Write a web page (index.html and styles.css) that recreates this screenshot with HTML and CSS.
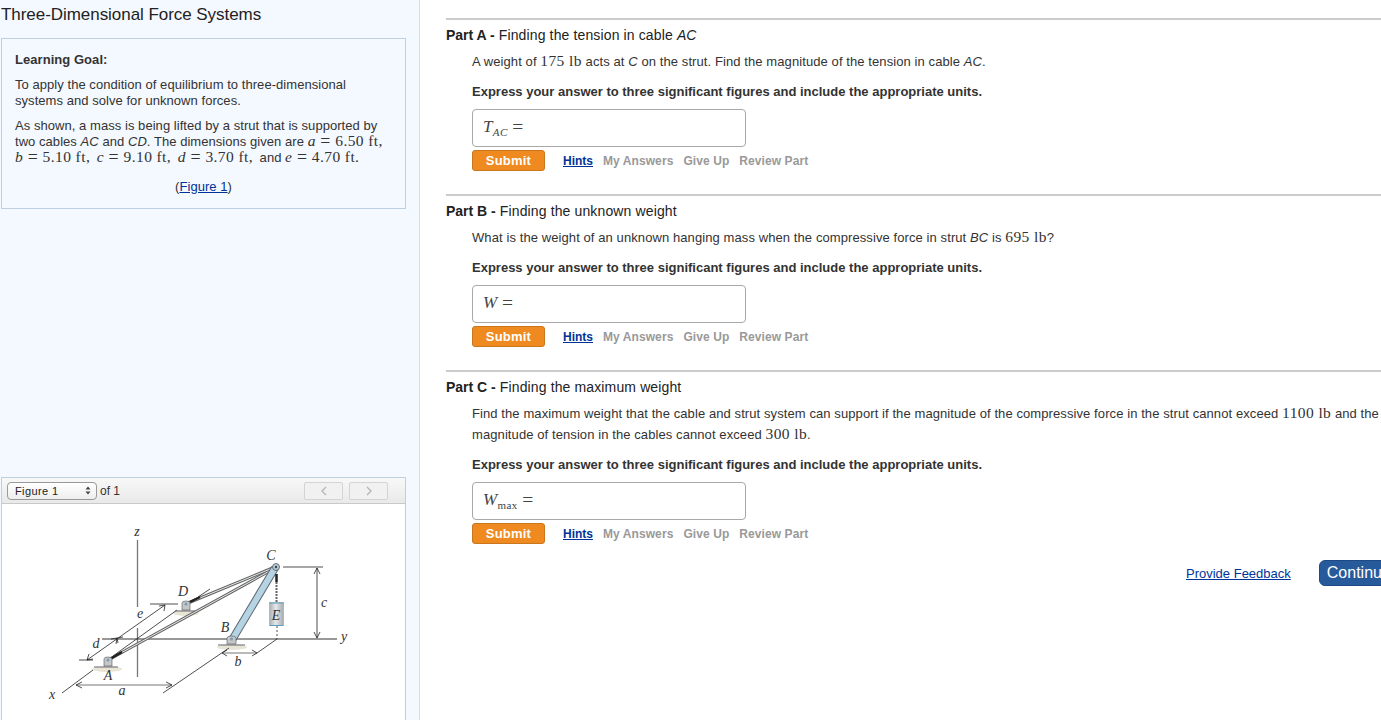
FILE: index.html
```html
<!DOCTYPE html>
<html lang="en">
<head>
    <meta charset="UTF-8">
    <title>Three-Dimensional Force Systems</title>
    <link rel="stylesheet" href="styles.css">
</head>
<body>
    <div class="page">
        <!-- Left pane -->
        <div class="left-pane">
            <h1 class="item-title">Three-Dimensional Force Systems</h1>
            <div class="intro">
                <p class="goal-label">Learning Goal:</p>
                <p>To apply the condition of equilibrium to three-dimensional systems and solve for unknown forces.</p>
                <p>As shown, a mass is being lifted by a strut that is supported by two cables <i>AC</i> and <i>CD</i>. The dimensions given are <span class="math list-item"><i>a</i><span class="eq">=</span>6.50 ft,</span> <span class="math list-item"><i>b</i><span class="eq">=</span>5.10 ft,</span> <span class="math list-item"><i>c</i><span class="eq">=</span>9.10 ft,</span> <span class="math list-item"><i>d</i><span class="eq">=</span>3.70 ft,</span> and <span class="math"><i>e</i><span class="eq">=</span>4.70 ft.</span></p>
                <p class="figure-link">(<a href="#">Figure 1</a>)</p>
            </div>
            <div class="figure-box">
                <div class="figure-bar">
                    <span class="figure-select">Figure 1
                        <svg class="select-arrows" viewBox="0 0 6 9" width="6" height="9"><path d="M3 0.5L5.5 3.5H0.5ZM3 8.5L5.5 5.5H0.5Z"/></svg>
                    </span>
                    <span class="figure-of">of 1</span>
                    <span class="nav-buttons">
                        <span class="nav-btn"><svg viewBox="0 0 6 10" width="6" height="10"><path d="M5 1L1 5L5 9"/></svg></span>
                        <span class="nav-btn"><svg viewBox="0 0 6 10" width="6" height="10"><path d="M1 1L5 5L1 9"/></svg></span>
                    </span>
                </div>
                <svg class="figure-img" viewBox="2 504 403 216" width="403" height="216">
                    <defs>
                        <linearGradient id="weightFill">
                            <stop offset="0" stop-color="#a9afb4"/>
                            <stop offset="0.45" stop-color="#e6e9eb"/>
                            <stop offset="1" stop-color="#a4aaaf"/>
                        </linearGradient>
                    </defs>
                    <!-- ground pads -->
                    <g class="ground">
                        <ellipse cx="107" cy="669" rx="15" ry="3"/>
                        <ellipse cx="186" cy="613" rx="13" ry="3"/>
                        <ellipse cx="232" cy="647" rx="15" ry="3"/>
                    </g>
                    <!-- z axis -->
                    <path d="M137.500 540V607M137.500 628V677" class="axis-z"/>
                    <!-- y axis -->
                    <path d="M102 639H337" class="axis"/>
                    <!-- x axis and dimension lines -->
                    <g class="dim">
                        <path d="M62 693L93 670"/>
                        <path d="M163 693L229 648"/>
                        <path d="M76 685H172" class="dim-gray"/>
                        <path d="M76 685l6 -3M76 685l6 3M172 685l-6 -3M172 685l-6 3"/>
                        <path d="M79 660H93"/>
                        <path d="M150 604H178"/>
                        <path d="M87 660L165 605"/>
                        <path d="M113 656L177 610"/>
                        <path d="M87 660l2 -6M87 660l6 -1M117 638l-6 1M117 638l-1 6M117 638l6 -1M117 638l1 5M165 605l-6 1M165 605l-1 6"/>
                        <path d="M222 653H257" class="dim-gray"/>
                        <path d="M222 653l5 -3M222 653l5 3M257 653l-5 -3M257 653l-5 3"/>
                        <path d="M257 653L277 639"/>
                        <path d="M283 567H323"/>
                        <path d="M317 568V638"/>
                        <path d="M317 568l-3 6M317 568l3 6M317 638l-3 -6M317 638l3 -6"/>
                        <path d="M277 626V639" stroke-dasharray="2 2"/>
                        <path d="M198 597L210 589"/>
                    </g>
                    <path d="M94 667H118M175 611H195M218 645H245" class="base"/>
                    <!-- cables -->
                    <g class="cable">
                        <path d="M110 659L275 568"/>
                        <path d="M188 603L275 567"/>
                    </g>
                    <g class="cable-inner">
                        <path d="M110 659L275 568"/>
                        <path d="M188 603L275 567"/>
                    </g>
                    <path d="M110 659L122 652M190 602L200 597" class="cable-end"/>
                    <!-- strut -->
                    <path d="M232 640L275 568" class="strut"/>
                    <path d="M232 640L275 568" class="strut-fill"/>
                    <!-- supports -->
                    <g class="support">
                        <path d="M104 666V659Q104 657 108 657Q112 657 112 659V666Z"/>
                        <path d="M182 610V603Q182 601 186 601Q190 601 190 603V610Z"/>
                        <path d="M227 644V638Q227 636 231.500 636Q236 636 236 638V644Z"/>
                    </g>
                    <g class="support-pin">
                        <circle cx="108" cy="660" r="1.500"/>
                        <circle cx="186" cy="604" r="1.500"/>
                        <circle cx="231.500" cy="639" r="1.500"/>
                    </g>
                    <!-- hanging weight -->
                    <path d="M276.500 582V602" class="chain"/>
                    <path d="M276.500 574V582" class="cable-end"/>
                    <rect x="269.500" y="602.500" width="14" height="23" class="weight"/>
                    <path d="M269.500 603H283.500M269.500 625.500H283.500" class="weight-rim"/>
                    <circle cx="276" cy="567" r="3.500" class="pin"/>
                    <circle cx="276" cy="567" r="1.200" class="pin-hole"/>
                    <!-- labels -->
                    <g class="labels">
                        <text x="137" y="536">z</text>
                        <text x="271" y="560">C</text>
                        <text x="183" y="596">D</text>
                        <text x="140" y="618">e</text>
                        <text x="225" y="632">B</text>
                        <text x="276" y="620">E</text>
                        <text x="324" y="607">c</text>
                        <text x="344" y="641">y</text>
                        <text x="96" y="648">d</text>
                        <text x="108" y="680">A</text>
                        <text x="238" y="666">b</text>
                        <text x="122" y="695">a</text>
                        <text x="52" y="699">x</text>
                    </g>
                </svg>
            </div>
        </div>

        <!-- Right pane -->
        <div class="right-pane">
            <div class="part">
                <h2 class="part-title"><b>Part A -</b> Finding the tension in cable <i>AC</i></h2>
                <p class="question">A weight of <span class="math">175 lb</span> acts at <i>C</i> on the strut. Find the magnitude of the tension in cable <i>AC</i>.</p>
                <p class="instruction">Express your answer to three significant figures and include the appropriate units.</p>
                <div class="answer-box"><span class="math"><i>T<sub>AC</sub></i><span class="eq">=</span></span></div>
                <div class="actions">
                    <span class="submit">Submit</span>
                    <a href="#" class="hints">Hints</a>
                    <span class="action">My Answers</span>
                    <span class="action">Give Up</span>
                    <span class="action">Review Part</span>
                </div>
            </div>
            <div class="part">
                <h2 class="part-title"><b>Part B -</b> Finding the unknown weight</h2>
                <p class="question">What is the weight of an unknown hanging mass when the compressive force in strut <i>BC</i> is <span class="math">695 lb</span>?</p>
                <p class="instruction">Express your answer to three significant figures and include the appropriate units.</p>
                <div class="answer-box"><span class="math"><i>W</i><span class="eq">=</span></span></div>
                <div class="actions">
                    <span class="submit">Submit</span>
                    <a href="#" class="hints">Hints</a>
                    <span class="action">My Answers</span>
                    <span class="action">Give Up</span>
                    <span class="action">Review Part</span>
                </div>
            </div>
            <div class="part">
                <h2 class="part-title"><b>Part C -</b> Finding the maximum weight</h2>
                <p class="question">Find the maximum weight that the cable and strut system can support if the magnitude of the compressive force in the strut cannot exceed <span class="math">1100 lb</span> and the magnitude of tension in the cables cannot exceed <span class="math">300 lb</span>.</p>
                <p class="instruction">Express your answer to three significant figures and include the appropriate units.</p>
                <div class="answer-box"><span class="math"><i>W</i><sub>max</sub><span class="eq">=</span></span></div>
                <div class="actions">
                    <span class="submit">Submit</span>
                    <a href="#" class="hints">Hints</a>
                    <span class="action">My Answers</span>
                    <span class="action">Give Up</span>
                    <span class="action">Review Part</span>
                </div>
            </div>
            <div class="footer-row">
                <a href="#" class="feedback">Provide Feedback</a>
                <span class="continue">Continue</span>
            </div>
        </div>
    </div>
</body>
</html>
```

FILE: styles.css
```css
html, body {
    margin: 0;
    height: 720px;
    overflow: hidden;
}
body {
    font-family: "Liberation Sans", Arial, sans-serif;
    font-size: 13px;
    color: #333;
    background: #fff;
}
p {
    margin: 0;
}
a {
    color: #003399;
}
.page {
    display: flex;
    width: 1381px;
    height: 720px;
    overflow: hidden;
}
.math {
    font-family: "Liberation Serif", "Times New Roman", serif;
    font-size: 15.5px;
    line-height: 0;
    letter-spacing: 0.4px;
    white-space: nowrap;
}
.list-item {
    margin-right: 3px;
}
.eq {
    margin: 0 4.5px;
    font-size: 1.15em;
    line-height: 0;
    vertical-align: -0.05em;
}
sub {
    font-size: 11px;
    line-height: 0;
}

/* Left pane */
.left-pane {
    flex: none;
    box-sizing: border-box;
    width: 420px;
    height: 720px;
    padding: 0 13px 0 1px;
    background: #f4f8ff;
    border-right: 1px solid #d5dfea;
    display: flex;
    flex-direction: column;
    overflow: hidden;
}
.item-title {
    flex: none;
    margin: 0;
    padding-top: 5px;
    height: 38px;
    box-sizing: border-box;
    font-size: 17px;
    line-height: 19px;
    font-weight: normal;
    color: #222;
    letter-spacing: -0.05px;
}
.intro {
    flex: none;
    box-sizing: border-box;
    height: 171px;
    padding: 13px 13px 0;
    border: 1px solid #bcd0e2;
    line-height: 16px;
    letter-spacing: 0.05px;
}
.intro p {
    margin-bottom: 9px;
}
.intro .goal-label {
    font-weight: bold;
}
.figure-link {
    text-align: center;
    padding-top: 4px;
}
.figure-box {
    flex: none;
    box-sizing: border-box;
    margin-top: 268px;
    height: 260px;
    border: 1px solid #bcd0e2;
    background: #fff;
}
.figure-bar {
    height: 26px;
    box-sizing: border-box;
    display: flex;
    align-items: center;
    padding: 0 17px 0 5px;
    background: linear-gradient(#f8f8f8, #e9e9e9);
    border-bottom: 1px solid #c9c9c9;
    font-size: 12px;
}
.figure-select {
    box-sizing: border-box;
    width: 90px;
    height: 18px;
    padding: 0 5px 0 7px;
    display: flex;
    align-items: center;
    justify-content: space-between;
    background: linear-gradient(#fff, #eee);
    border: 1px solid #999;
    border-radius: 4px;
    font-size: 11px;
    letter-spacing: 0.4px;
    color: #222;
}
.select-arrows path {
    fill: #444;
}
.figure-of {
    margin-left: 3px;
}
.nav-buttons {
    margin-left: auto;
    display: flex;
    gap: 6px;
}
.nav-btn {
    box-sizing: border-box;
    width: 39px;
    height: 18px;
    display: flex;
    align-items: center;
    justify-content: center;
    border: 1px solid #d4d4d4;
    border-radius: 2px;
    background: #f1f1f1;
}
.nav-btn path {
    fill: none;
    stroke: #b5b5b5;
    stroke-width: 1.3;
}
.figure-img {
    display: block;
}
.axis {
    stroke: #333;
    stroke-width: 1;
    fill: none;
}
.axis-z {
    stroke: #777;
    stroke-width: 1.3;
    fill: none;
}
.base {
    stroke: #667;
    stroke-width: 1.2;
    fill: none;
}
.dim path {
    stroke: #222;
    stroke-width: 0.8;
    fill: none;
}
.dim .dim-gray {
    stroke: #777;
    stroke-width: 1.2;
}
.ground ellipse {
    fill: #e9e5d6;
}
.cable path {
    stroke: #666;
    stroke-width: 3;
    fill: none;
}
.cable-inner path {
    stroke: #e4e8ea;
    stroke-width: 1;
    fill: none;
}
.cable-end {
    stroke: #222;
    stroke-width: 2.5;
    fill: none;
}
.strut {
    stroke: #5a6670;
    stroke-width: 8;
    fill: none;
}
.strut-fill {
    stroke: #b5d3e3;
    stroke-width: 6;
    fill: none;
}
.support path {
    fill: #c3c7c9;
    stroke: #555;
    stroke-width: 0.6;
}
.support-pin circle {
    fill: #7d9bb0;
}
.chain {
    stroke: #666;
    stroke-width: 2;
    stroke-dasharray: 2 1;
    fill: none;
}
.weight {
    fill: url(#weightFill);
    stroke: #999;
    stroke-width: 0.5;
}
.weight-rim {
    stroke: #5aa0c0;
    stroke-width: 1;
}
.pin {
    fill: #b5c9d4;
    stroke: #555;
    stroke-width: 0.8;
}
.pin-hole {
    fill: #345;
}
.labels text {
    font-family: "Liberation Serif", "Times New Roman", serif;
    font-style: italic;
    font-size: 14px;
    text-anchor: middle;
    fill: #333;
}

/* Right pane */
.right-pane {
    flex: none;
    width: 961px;
    box-sizing: border-box;
    padding: 18px 0 0 26px;
}
.part {
    width: 1100px;
    height: 176px;
    box-sizing: border-box;
    border-top: 2px solid #ccc;
    padding-top: 6px;
}
.part:last-of-type {
    height: auto;
}
.part-title {
    margin: 0;
    font-size: 14px;
    font-weight: normal;
    line-height: 18px;
    color: #222;
    letter-spacing: 0.13px;
}
.part-title b {
    letter-spacing: 0;
}
.question {
    margin: 7px 0 0 26px;
    width: 915px;
    line-height: 21px;
    letter-spacing: 0.09px;
}
.instruction {
    margin: 9px 0 0 26px;
    font-weight: bold;
    line-height: 21px;
}
.answer-box {
    box-sizing: border-box;
    width: 274px;
    height: 38px;
    margin: 7px 0 0 26px;
    padding-left: 10px;
    line-height: 35px;
    border: 1px solid #a8a8a8;
    border-radius: 4px;
    background: #fff;
}
.answer-box .math {
    font-size: 17px;
    color: #444;
}
.actions {
    margin: 3px 0 0 26px;
    height: 21px;
    display: flex;
    align-items: center;
    font-weight: bold;
    font-size: 12px;
}
.submit {
    box-sizing: border-box;
    width: 73px;
    height: 21px;
    line-height: 19px;
    margin-right: 18px;
    text-align: center;
    color: #fff;
    font-size: 13px;
    background: #ee8a20;
    border: 1px solid #c9771f;
    border-radius: 3px;
    letter-spacing: 0.2px;
}
.action {
    margin-left: 10px;
    color: #999;
    letter-spacing: 0.08px;
}
.footer-row {
    display: flex;
    align-items: center;
    margin-top: 14px;
    height: 26px;
    width: 1100px;
    padding-left: 740px;
    box-sizing: border-box;
}
.feedback {
    font-size: 13px;
}
.continue {
    margin-left: 28px;
    box-sizing: border-box;
    height: 26px;
    padding: 0 7px;
    line-height: 24px;
    font-size: 16px;
    color: #fff;
    background: #275a9b;
    border: 1px solid #1d4a85;
    border-radius: 6px;
}
```
